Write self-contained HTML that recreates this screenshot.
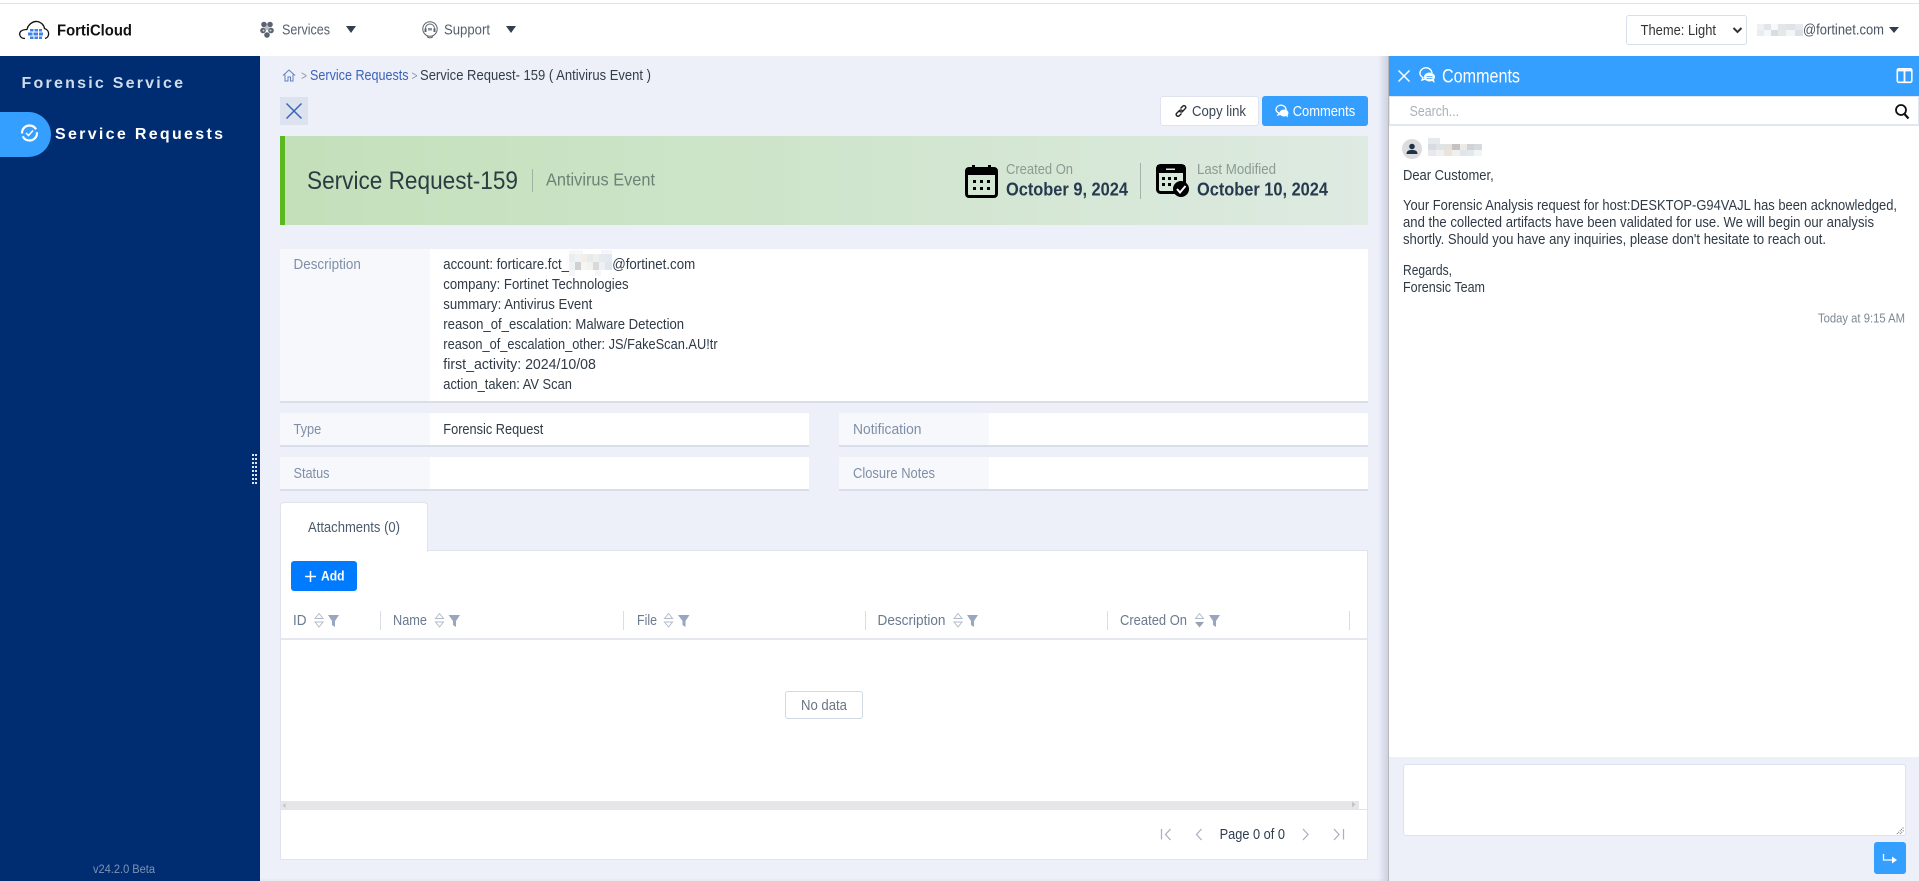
<!DOCTYPE html>
<html lang="en">
<head>
<meta charset="utf-8">
<title>FortiCloud - Service Request 159</title>
<style>
html,body{margin:0;padding:0;width:1919px;height:881px;overflow:hidden;background:#edf0f9;font-family:"Liberation Sans",sans-serif}
.b{position:absolute;box-sizing:border-box}
svg.layer{position:absolute;left:0;top:0;width:1919px;height:881px}
text{font-family:"Liberation Sans",sans-serif;font-size:14px;fill:#3a4654;white-space:pre}
</style>
</head>
<body>
<!-- top bar -->
<div class="b" style="left:0;top:0;width:1919px;height:56px;background:#fff"></div>
<div class="b" style="left:0;top:3px;width:1919px;height:1px;background:#e3e3e3"></div>
<!-- sidebar -->
<div class="b" style="left:0;top:56px;width:260px;height:825px;background:#002d72"></div>
<div class="b" style="left:0;top:112px;width:51px;height:45px;background:#349fff;border-radius:0 23px 23px 0"></div>
<!-- breadcrumb X -->
<div class="b" style="left:280px;top:97px;width:28px;height:28px;background:#dde3ee"></div>
<!-- action buttons -->
<div class="b" style="left:1160px;top:96px;width:99px;height:30px;background:#fff;border:1px solid #dfe3ee;border-radius:3px"></div>
<div class="b" style="left:1262px;top:96px;width:106px;height:30px;background:#349fff;border-radius:3px"></div>
<!-- banner -->
<div class="b" style="left:280px;top:136px;width:1088px;height:89px;border-left:5px solid #5cb820;background:linear-gradient(90deg,#c3e0ba 0%,#cfe5cc 50%,#deeae2 100%)"></div>
<!-- description -->
<div class="b" style="left:280px;top:249px;width:1088px;height:154px;background:#fff;border-bottom:2px solid #d8deea"></div>
<div class="b" style="left:280px;top:249px;width:150px;height:152px;background:#f7f8fb"></div>
<!-- rows -->
<div class="b" style="left:280px;top:413px;width:529px;height:34px;background:#fff;border-bottom:2px solid #d8deea"></div>
<div class="b" style="left:280px;top:413px;width:150px;height:32px;background:#f7f8fb"></div>
<div class="b" style="left:839px;top:413px;width:529px;height:34px;background:#fff;border-bottom:2px solid #d8deea"></div>
<div class="b" style="left:839px;top:413px;width:150px;height:32px;background:#f7f8fb"></div>
<div class="b" style="left:280px;top:457px;width:529px;height:34px;background:#fff;border-bottom:2px solid #d8deea"></div>
<div class="b" style="left:280px;top:457px;width:150px;height:32px;background:#f7f8fb"></div>
<div class="b" style="left:839px;top:457px;width:529px;height:34px;background:#fff;border-bottom:2px solid #d8deea"></div>
<div class="b" style="left:839px;top:457px;width:150px;height:32px;background:#f7f8fb"></div>
<!-- card -->
<div class="b" style="left:280px;top:550px;width:1088px;height:310px;background:#fff;border:1px solid #dfe3ee"></div>
<div class="b" style="left:280px;top:502px;width:148px;height:50px;background:#fff;border:1px solid #dfe3ee;border-bottom:none;border-radius:4px 4px 0 0"></div>
<div class="b" style="left:291px;top:561px;width:66px;height:30px;background:#007bff;border-radius:3px"></div>
<div class="b" style="left:281px;top:638px;width:1086px;height:2px;background:#e4e7ef"></div>
<div class="b" style="left:785px;top:691px;width:78px;height:28px;background:#fff;border:1px solid #d0d8e6;border-radius:3px"></div>
<div class="b" style="left:281px;top:801px;width:1078px;height:8px;background:#e6e6e8"></div>
<div class="b" style="left:281px;top:809px;width:1086px;height:1px;background:#e0e4ec"></div>
<!-- bottom hairline -->
<div class="b" style="left:260px;top:879px;width:1128px;height:2px;background:#e8ebf3"></div>
<!-- right panel -->
<div class="b" style="left:1378px;top:56px;width:10px;height:825px;background:linear-gradient(90deg,rgba(205,210,225,0),#cdd2e0)"></div>
<div class="b" style="left:1388px;top:56px;width:1px;height:825px;background:#b8b8bc"></div>
<div class="b" style="left:1389px;top:56px;width:530px;height:825px;background:#fff"></div>
<div class="b" style="left:1389px;top:56px;width:530px;height:40px;background:#349fff"></div>
<div class="b" style="left:1389px;top:96px;width:530px;height:30px;background:#fff;border:1px solid #e2e6f0;border-bottom:2px solid #e2e6f0"></div>
<div class="b" style="left:1389px;top:757px;width:530px;height:124px;background:#edf0f9"></div>
<div class="b" style="left:1403px;top:764px;width:503px;height:72px;background:#fff;border:1px solid #dde2ee;border-radius:3px"></div>
<div class="b" style="left:1874px;top:842px;width:32px;height:32px;background:#349fff;border-radius:3px"></div>
<!-- theme -->
<div class="b" style="left:1626px;top:15px;width:121px;height:30px;background:#fff;border:1px solid #d8deea;border-radius:3px"></div>

<svg class="layer" viewBox="0 0 1919 881" xmlns="http://www.w3.org/2000/svg">
<!-- masked mosaics -->
<g>
<rect x="1757" y="24" width="7" height="6" fill="#eef1f3"/><rect x="1764" y="24" width="7" height="6" fill="#dfe5ea"/><rect x="1771" y="24" width="7" height="6" fill="#f7f8f8"/><rect x="1778" y="24" width="8" height="6" fill="#e2e6ea"/><rect x="1786" y="24" width="9" height="6" fill="#dfe3e6"/><rect x="1795" y="24" width="8" height="6" fill="#e6eaee"/>
<rect x="1757" y="30" width="7" height="6" fill="#e8edf1"/><rect x="1764" y="30" width="7" height="6" fill="#f5f7f8"/><rect x="1771" y="30" width="7" height="6" fill="#d9dde1"/><rect x="1778" y="30" width="8" height="6" fill="#e4e8e6"/><rect x="1786" y="30" width="9" height="6" fill="#f3f7f3"/><rect x="1795" y="30" width="8" height="6" fill="#dde0e4"/>
<rect x="569" y="250" width="14" height="4" fill="#f6f7f8"/><rect x="601" y="250" width="11" height="4" fill="#f4f6fa"/>
<rect x="569" y="254" width="6" height="8" fill="#e9eef0"/><rect x="575" y="254" width="6" height="8" fill="#f0f3f3"/><rect x="581" y="254" width="6" height="8" fill="#f3efe8"/><rect x="587" y="254" width="6" height="8" fill="#e6ecea"/><rect x="593" y="254" width="6" height="8" fill="#eef0f0"/><rect x="599" y="254" width="6" height="8" fill="#e6e9ee"/><rect x="605" y="254" width="7" height="8" fill="#e3e9f0"/>
<rect x="569" y="262" width="6" height="8" fill="#f0f3f4"/><rect x="575" y="262" width="6" height="8" fill="#d0d1d3"/><rect x="581" y="262" width="6" height="8" fill="#f6f5f2"/><rect x="587" y="262" width="6" height="8" fill="#f2f3f0"/><rect x="593" y="262" width="6" height="8" fill="#d8d9db"/><rect x="599" y="262" width="6" height="8" fill="#eef0f2"/><rect x="605" y="262" width="7" height="8" fill="#dee6f0"/>
<rect x="569" y="270" width="6" height="6" fill="#f4f6f8"/><rect x="595" y="270" width="6" height="6" fill="#f4f6f8"/>
<rect x="1428" y="138" width="12" height="6" fill="#e6eaee"/>
<rect x="1428" y="144" width="8" height="6" fill="#d8dce2"/><rect x="1436" y="144" width="8" height="6" fill="#e0e4e8"/><rect x="1444" y="144" width="8" height="6" fill="#e4e2e0"/><rect x="1452" y="144" width="8" height="6" fill="#c6c2c2"/><rect x="1460" y="144" width="7" height="6" fill="#eceae6"/><rect x="1467" y="144" width="7" height="6" fill="#cfd3d8"/><rect x="1474" y="144" width="8" height="6" fill="#d6dadf"/>
<rect x="1428" y="150" width="8" height="6" fill="#e6eaee"/><rect x="1436" y="150" width="8" height="6" fill="#eef0f2"/><rect x="1444" y="150" width="8" height="6" fill="#ece4da"/><rect x="1452" y="150" width="8" height="6" fill="#eff0ee"/><rect x="1460" y="150" width="7" height="6" fill="#dfe6ea"/><rect x="1467" y="150" width="7" height="6" fill="#e3e8ec"/><rect x="1474" y="150" width="8" height="6" fill="#f0f5f6"/>
</g>
<!-- logo -->
<path d="M25 38.500C20.500 38.500 19 35 20 32.500C21 30.500 24 29.500 27 29.500C28 24.500 33 21 37 21.500C41 22 44 25 44.500 28.500C47.500 29.500 49 32 48.500 35C48 37 47 38 45 38.500" fill="none" stroke="#111" stroke-width="1.300"/>
<g fill="#3f83e6"><rect x="30" y="29" width="3.500" height="2.500"/><rect x="34.500" y="29" width="3.500" height="2.500"/><rect x="39" y="29" width="3" height="2.500"/><rect x="28" y="32.500" width="4.500" height="3"/><rect x="33.500" y="32.500" width="4.500" height="3"/><rect x="39" y="32.500" width="4" height="3"/><rect x="30" y="36.500" width="3.500" height="2.500"/><rect x="34.500" y="36.500" width="3.500" height="2.500"/><rect x="39" y="36.500" width="3" height="2.500"/></g>
<text x="57" y="35.500" textLength="75" lengthAdjust="spacingAndGlyphs" style="font-size:15.500px;font-weight:700;fill:#111">FortiCloud</text>
<!-- services icon -->
<g fill="#5a636e"><circle cx="264" cy="24.500" r="2.800"/><circle cx="270" cy="24.500" r="2.800"/><circle cx="263" cy="30.500" r="2.800"/><circle cx="271" cy="30.500" r="2.800"/><circle cx="267" cy="35" r="2.800"/></g><circle cx="267" cy="28" r="2.300" fill="#b9bec5"/><circle cx="263.500" cy="30.500" r="1" fill="#d0d4d9"/><circle cx="270.500" cy="30.500" r="1" fill="#d0d4d9"/>
<text x="282" y="34.500" textLength="48" lengthAdjust="spacingAndGlyphs" style="fill:#55606e;font-size:14.500px">Services</text>
<path d="M346 26H356L351 33Z" fill="#333f4d"/>
<!-- support icon -->
<circle cx="430" cy="29" r="7.200" fill="none" stroke="#5a636e" stroke-width="1"/><path d="M425.500 30.500v-2a4.500 4.500 0 0 1 9 0v2" fill="none" stroke="#5a636e" stroke-width="1"/><rect x="424.500" y="28.500" width="2" height="3.500" fill="#5a636e"/><rect x="433.500" y="28.500" width="2" height="3.500" fill="#5a636e"/><rect x="428" y="28" width="4" height="2.500" fill="#8b929b"/><path d="M427 36.500a4 4 0 0 0 6 0" stroke="#5a636e" fill="none"/>
<text x="444" y="34.500" textLength="46" lengthAdjust="spacingAndGlyphs" style="fill:#55606e;font-size:14.500px">Support</text>
<path d="M506 26H516L511 33Z" fill="#333f4d"/>
<!-- theme / user -->
<text x="1640.600" y="35" textLength="75.400" lengthAdjust="spacingAndGlyphs" style="fill:#333;font-size:14.500px">Theme: Light</text>
<path d="M1733.500 28L1737.500 32L1741.500 28" fill="none" stroke="#333" stroke-width="2"/>
<text x="1803" y="34.500" textLength="81" lengthAdjust="spacingAndGlyphs" style="fill:#4a5562;font-size:14.500px">@fortinet.com</text>
<path d="M1889 27H1899L1894 33Z" fill="#333f4d"/>
<!-- sidebar text -->
<text x="21.500" y="88" textLength="161.500" lengthAdjust="spacing" style="font-size:16px;font-weight:700;fill:#cfdcec">Forensic Service</text>
<text x="55" y="139" textLength="168" lengthAdjust="spacing" style="font-size:16px;font-weight:700;fill:#fff">Service Requests</text>
<circle cx="29.500" cy="133" r="7.500" fill="none" stroke="#fff" stroke-width="2.200" stroke-dasharray="20 3"/>
<path d="M26 133L28.500 135.500L33 130.500" fill="none" stroke="#fff" stroke-width="1.500"/>
<text x="93" y="873" textLength="62" lengthAdjust="spacingAndGlyphs" style="font-size:11.500px;fill:#7f93b5">v24.2.0 Beta</text>
<!-- splitter -->
<g fill="#dfe6f0"><rect x="252" y="454" width="2" height="2"/><rect x="255" y="454" width="2" height="2"/><rect x="252" y="458" width="2" height="2"/><rect x="255" y="458" width="2" height="2"/><rect x="252" y="462" width="2" height="2"/><rect x="255" y="462" width="2" height="2"/><rect x="252" y="466" width="2" height="2"/><rect x="255" y="466" width="2" height="2"/><rect x="252" y="470" width="2" height="2"/><rect x="255" y="470" width="2" height="2"/><rect x="252" y="474" width="2" height="2"/><rect x="255" y="474" width="2" height="2"/><rect x="252" y="478" width="2" height="2"/><rect x="255" y="478" width="2" height="2"/><rect x="252" y="482" width="2" height="2"/><rect x="255" y="482" width="2" height="2"/></g>
<!-- breadcrumb -->
<path d="M283 75.500L289 70L295 75.500M285 74.500V81H288V77H290.500V81H293V74.500" fill="none" stroke="#5f7fc0" stroke-width="1"/>
<text x="301" y="80" textLength="6" lengthAdjust="spacingAndGlyphs" style="fill:#8b97a8;font-size:13px">&gt;</text>
<text x="310" y="80" textLength="98.600" lengthAdjust="spacingAndGlyphs" style="fill:#3a63b8;font-size:14.500px">Service Requests</text>
<text x="411.500" y="80" textLength="6" lengthAdjust="spacingAndGlyphs" style="fill:#8b97a8;font-size:13px">&gt;</text>
<text x="420" y="80" textLength="231" lengthAdjust="spacingAndGlyphs" style="fill:#333d49;font-size:14.500px">Service Request- 159 ( Antivirus Event )</text>
<path d="M286.500 103.500L301.500 118.500M301.500 103.500L286.500 118.500" stroke="#3a63b8" stroke-width="1.500" fill="none"/>
<!-- copy link -->
<g fill="none" stroke="#222" stroke-width="1.400"><path d="M1180.500 108.500L1183 106C1184.500 104.800 1186.500 106.800 1185.500 108.300L1182.500 111.500C1181.500 112.500 1180 112 1179.500 111"/><path d="M1181.500 113.500L1179 116C1177.500 117 1175.300 115 1176.500 113.500L1179.500 110.500C1180.500 109.500 1182 110 1182.500 111"/></g>
<text x="1192" y="116" textLength="54" lengthAdjust="spacingAndGlyphs" style="fill:#3a4654;font-size:14.500px">Copy link</text>
<!-- comments -->
<g fill="#fff"><path d="M1276 110a5 4.500 0 1 1 8 3.300l-6 1.700 1-2a5 4.500 0 0 1-3-3z" fill="none" stroke="#fff" stroke-width="1.300"/><ellipse cx="1284" cy="113" rx="4.500" ry="3.500"/><path d="M1285 115l3 2.500-.5-3.500z"/></g>
<text x="1292.700" y="116" textLength="62.500" lengthAdjust="spacingAndGlyphs" style="fill:#fff;font-size:14.500px">Comments</text>
<!-- banner text -->
<text x="307" y="189" textLength="211" lengthAdjust="spacingAndGlyphs" style="font-size:25px;fill:#2c3d42">Service Request-159</text>
<rect x="532" y="169" width="1" height="23" fill="#9fb3a4"/>
<text x="546" y="185.500" textLength="109" lengthAdjust="spacingAndGlyphs" style="font-size:17.500px;fill:#6d8275">Antivirus Event</text>
<!-- calendar 1 -->
<g><rect x="966.500" y="168.500" width="30" height="28" rx="2.500" fill="none" stroke="#000" stroke-width="3"/><rect x="966" y="168" width="31" height="7" fill="#000"/><rect x="972" y="165" width="3" height="6" fill="#000"/><rect x="988" y="165" width="3" height="6" fill="#000"/><g fill="#000"><rect x="973" y="180" width="3" height="3"/><rect x="980" y="180" width="3" height="3"/><rect x="987" y="180" width="3" height="3"/><rect x="973" y="187" width="3" height="3"/><rect x="980" y="187" width="3" height="3"/><rect x="987" y="187" width="3" height="3"/></g></g>
<text x="1006" y="174" textLength="67" lengthAdjust="spacingAndGlyphs" style="fill:#8b9b93;font-size:14.500px">Created On</text>
<text x="1006" y="195.500" textLength="122" lengthAdjust="spacingAndGlyphs" style="font-size:18px;font-weight:700;fill:#26394d">October 9, 2024</text>
<rect x="1140" y="163" width="1" height="36" fill="#a3b3a7"/>
<!-- calendar 2 -->
<g><rect x="1157.500" y="165.500" width="27" height="27" rx="3" fill="none" stroke="#000" stroke-width="3"/><rect x="1157" y="165" width="28" height="8" fill="#000"/><rect x="1166" y="168.500" width="9" height="1.500" fill="#dde9dc"/><g fill="#000"><rect x="1162" y="177" width="3" height="3"/><rect x="1168" y="177" width="3" height="3"/><rect x="1174" y="177" width="3" height="3"/><rect x="1162" y="183" width="3" height="3"/><rect x="1168" y="183" width="3" height="3"/></g><circle cx="1181" cy="189" r="8" fill="#000"/><path d="M1177 189L1180 192.500L1185.500 186" stroke="#fff" stroke-width="2" fill="none"/></g>
<text x="1197" y="174" textLength="79" lengthAdjust="spacingAndGlyphs" style="fill:#8b9b93;font-size:14.500px">Last Modified</text>
<text x="1197" y="195.500" textLength="131" lengthAdjust="spacingAndGlyphs" style="font-size:18px;font-weight:700;fill:#26394d">October 10, 2024</text>
<!-- description -->
<text x="293.500" y="269" textLength="67.300" lengthAdjust="spacingAndGlyphs" style="fill:#7f8fa8;font-size:14.500px">Description</text>
<text x="443.300" y="269" textLength="125.700" lengthAdjust="spacingAndGlyphs" style="fill:#2f3a46;font-size:14.500px">account: forticare.fct_</text>
<text x="612.200" y="269" textLength="83" lengthAdjust="spacingAndGlyphs" style="fill:#2f3a46;font-size:14.500px">@fortinet.com</text>
<text x="443.300" y="289" textLength="185.300" lengthAdjust="spacingAndGlyphs" style="fill:#2f3a46;font-size:14.500px">company: Fortinet Technologies</text>
<text x="443.300" y="309" textLength="149" lengthAdjust="spacingAndGlyphs" style="fill:#2f3a46;font-size:14.500px">summary: Antivirus Event</text>
<text x="443.300" y="329" textLength="240.800" lengthAdjust="spacingAndGlyphs" style="fill:#2f3a46;font-size:14.500px">reason_of_escalation: Malware Detection</text>
<text x="443.300" y="349" textLength="274.300" lengthAdjust="spacingAndGlyphs" style="fill:#2f3a46;font-size:14.500px">reason_of_escalation_other: JS/FakeScan.AU!tr</text>
<text x="443.300" y="369" textLength="152.600" lengthAdjust="spacingAndGlyphs" style="fill:#2f3a46;font-size:14.500px">first_activity: 2024/10/08</text>
<text x="443.300" y="389" textLength="128.600" lengthAdjust="spacingAndGlyphs" style="fill:#2f3a46;font-size:14.500px">action_taken: AV Scan</text>
<text x="293.500" y="434" textLength="27.800" lengthAdjust="spacingAndGlyphs" style="fill:#7f8fa8;font-size:14.500px">Type</text>
<text x="443.300" y="434" textLength="100" lengthAdjust="spacingAndGlyphs" style="fill:#2f3a46;font-size:14.500px">Forensic Request</text>
<text x="293.500" y="478" textLength="36" lengthAdjust="spacingAndGlyphs" style="fill:#7f8fa8;font-size:14.500px">Status</text>
<text x="853" y="434" textLength="68.500" lengthAdjust="spacingAndGlyphs" style="fill:#7f8fa8;font-size:14.500px">Notification</text>
<text x="853" y="478" textLength="82" lengthAdjust="spacingAndGlyphs" style="fill:#7f8fa8;font-size:14.500px">Closure Notes</text>
<!-- tab -->
<text x="308" y="532" textLength="92" lengthAdjust="spacingAndGlyphs" style="fill:#4b5b6b;font-size:14.500px">Attachments (0)</text>
<!-- add -->
<path d="M305 576.500H316M310.500 571V582" stroke="#fff" stroke-width="1.500"/>
<text x="321" y="580.500" textLength="23.500" lengthAdjust="spacingAndGlyphs" style="fill:#fff;font-weight:700;font-size:14px">Add</text>
<!-- table header -->
<g fill="#d9dde6"><rect x="380" y="611" width="1" height="19"/><rect x="623" y="611" width="1" height="19"/><rect x="865" y="611" width="1" height="19"/><rect x="1107" y="611" width="1" height="19"/><rect x="1349" y="611" width="1" height="19"/></g>
<text x="293" y="625" textLength="13.500" lengthAdjust="spacingAndGlyphs" style="fill:#6a7a90;font-size:14.500px">ID</text>
<text x="393" y="625" textLength="34" lengthAdjust="spacingAndGlyphs" style="fill:#6a7a90;font-size:14.500px">Name</text>
<text x="637" y="625" textLength="20" lengthAdjust="spacingAndGlyphs" style="fill:#6a7a90;font-size:14.500px">File</text>
<text x="877.500" y="625" textLength="68" lengthAdjust="spacingAndGlyphs" style="fill:#6a7a90;font-size:14.500px">Description</text>
<text x="1120" y="625" textLength="67" lengthAdjust="spacingAndGlyphs" style="fill:#6a7a90;font-size:14.500px">Created On</text>
<g fill="none" stroke="#b3bac9" stroke-width="1">
<path d="M315 618.500L319 613.500L323 618.500ZM315 622L319 627L323 622Z"/>
<path d="M435.500 618.500L439.500 613.500L443.500 618.500ZM435.500 622L439.500 627L443.500 622Z"/>
<path d="M664.500 618.500L668.500 613.500L672.500 618.500ZM664.500 622L668.500 627L672.500 622Z"/>
<path d="M954 618.500L958 613.500L962 618.500ZM954 622L958 627L962 622Z"/>
<path d="M1195.500 618.500L1199.500 613.500L1203.500 618.500Z"/>
</g>
<path d="M1195 622H1204L1199.500 627.500Z" fill="#9aa3b5"/>
<g fill="#98a6c0">
<path d="M328 615H339L335 621V627L332 625V621Z"/>
<path d="M448.500 615H460L456 621V627L453 625V621Z"/>
<path d="M678 615H689.500L685.500 621V627L682.500 625V621Z"/>
<path d="M967 615H978L974 621V627L971 625V621Z"/>
<path d="M1209 615H1220L1216 621V627L1213 625V621Z"/>
</g>
<text x="801" y="710" textLength="46" lengthAdjust="spacingAndGlyphs" style="fill:#6b7684;font-size:14.500px">No data</text>
<!-- scrollbar arrows -->
<path d="M285.500 803L282.500 805.500L285.500 808Z" fill="#c4c4c8"/>
<path d="M1352 801.500L1355.500 804.500L1352 807.500Z" fill="#c4c4c8"/>
<!-- pager -->
<g fill="none" stroke="#a9b2c0" stroke-width="1.300">
<path d="M1161.500 829V839.500M1170.500 829L1165.500 834.500L1170.500 840"/>
<path d="M1201.500 829L1196.500 834.500L1201.500 840"/>
<path d="M1303 829L1308 834.500L1303 840"/>
<path d="M1334 829L1339 834.500L1334 840M1343.500 829V839.500"/>
</g>
<text x="1219.600" y="839" textLength="65.400" lengthAdjust="spacingAndGlyphs" style="fill:#2f3e50;font-size:14.500px">Page 0 of 0</text>
<!-- panel header -->
<path d="M1398.500 70.500L1409.500 81.500M1409.500 70.500L1398.500 81.500" stroke="#fff" stroke-width="1.500"/>
<g><path d="M1420 74a6 5.500 0 1 1 9 4l-7 2 1-2.500a6 5.500 0 0 1-3-3.500z" fill="none" stroke="#fff" stroke-width="1.400"/><ellipse cx="1429.500" cy="77" rx="5.500" ry="4.500" fill="#fff"/><path d="M1431 80l3.500 3-.5-4z" fill="#fff"/><path d="M1426.500 76.500h6M1426.500 78.500h6" stroke="#349fff" stroke-width=".8"/></g>
<text x="1442" y="82.500" textLength="78" lengthAdjust="spacingAndGlyphs" style="font-size:19px;fill:#fff">Comments</text>
<g fill="none" stroke="#fff" stroke-width="1.600"><rect x="1897.300" y="68.800" width="14.500" height="13.500" rx="1.500"/><path d="M1904.500 69V82M1897 70.500H1912" stroke-width="1.800"/></g>
<!-- search -->
<text x="1409.600" y="116" textLength="49.500" lengthAdjust="spacingAndGlyphs" style="fill:#abb1ba;font-size:14.500px">Search...</text>
<circle cx="1901" cy="110" r="5" fill="none" stroke="#111" stroke-width="1.800"/><path d="M1904.500 114L1908.500 118.500" stroke="#111" stroke-width="2.200"/>
<!-- avatar -->
<circle cx="1412" cy="149" r="10" fill="#dcdcdf"/>
<circle cx="1412" cy="146.500" r="2.800" fill="#1f3247"/><path d="M1406.500 154C1406.500 150.500 1409 150 1412 150S1417.500 150.500 1417.500 154Z" fill="#1f3247"/>
<!-- comment -->
<text x="1403" y="180" textLength="90.700" lengthAdjust="spacingAndGlyphs" style="fill:#2f3a46;font-size:14.500px">Dear Customer,</text>
<text x="1403" y="210" textLength="494" lengthAdjust="spacingAndGlyphs" style="fill:#2f3a46;font-size:14.500px">Your Forensic Analysis request for host:DESKTOP-G94VAJL has been acknowledged,</text>
<text x="1403" y="227" textLength="471" lengthAdjust="spacingAndGlyphs" style="fill:#2f3a46;font-size:14.500px">and the collected artifacts have been validated for use. We will begin our analysis</text>
<text x="1403" y="244" textLength="423" lengthAdjust="spacingAndGlyphs" style="fill:#2f3a46;font-size:14.500px">shortly. Should you have any inquiries, please don't hesitate to reach out.</text>
<text x="1403" y="275" textLength="49" lengthAdjust="spacingAndGlyphs" style="fill:#2f3a46;font-size:14.500px">Regards,</text>
<text x="1403" y="292" textLength="82" lengthAdjust="spacingAndGlyphs" style="fill:#2f3a46;font-size:14.500px">Forensic Team</text>
<text x="1818" y="322.500" textLength="87" lengthAdjust="spacingAndGlyphs" style="font-size:12.500px;fill:#7c8894">Today at 9:15 AM</text>
<!-- textarea resize -->
<path d="M1897 834L1904 827M1900 834L1904 830" stroke="#666" stroke-width="1" stroke-dasharray="1 1"/>
<!-- send -->
<path d="M1883.500 854V860H1893" fill="none" stroke="#fff" stroke-width="1.300"/><path d="M1892 856.500L1897 860L1892 863.500Z" fill="#fff"/>
</svg>
</body>
</html>
